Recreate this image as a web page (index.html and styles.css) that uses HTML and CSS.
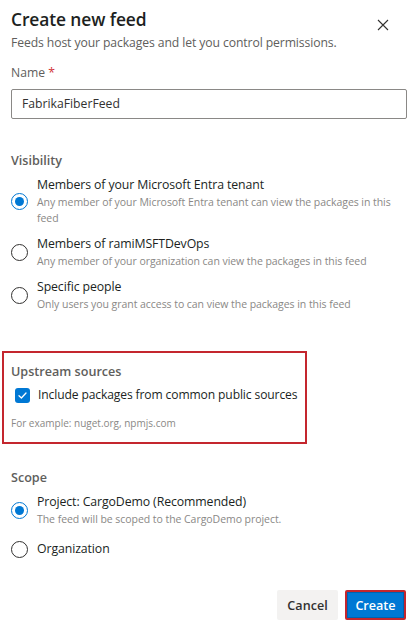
FILE: index.html
```html
<!DOCTYPE html>
<html lang="en">
<head>
<meta charset="utf-8">
<title>Create new feed</title>
<link rel="stylesheet" href="styles.css">
</head>
<body>
<div class="panel">
  <header class="header">
    <div class="head-text">
      <h1 class="title">Create new feed</h1>
      <p class="subtitle">Feeds host your packages and let you control permissions.</p>
    </div>
    <button class="close" aria-label="Close">
      <svg width="12" height="12" viewBox="0 0 12 12"><path d="M1 1 L11 11 M11 1 L1 11" stroke="#323130" stroke-width="1.1" fill="none"/></svg>
    </button>
  </header>

  <div class="field">
    <label class="label">Name <span class="req">*</span></label>
    <div class="input">FabrikaFiberFeed</div>
  </div>

  <section class="group vis">
    <div class="group-title">Visibility</div>
    <div class="option opt1">
      <span class="radio checked"></span>
      <div class="opt-text">
        <div class="opt-title">Members of your Microsoft Entra tenant</div>
        <div class="opt-desc">Any member of your Microsoft Entra tenant can view the packages in this feed</div>
      </div>
    </div>
    <div class="option opt2">
      <span class="radio"></span>
      <div class="opt-text">
        <div class="opt-title">Members of ramiMSFTDevOps</div>
        <div class="opt-desc">Any member of your organization can view the packages in this feed</div>
      </div>
    </div>
    <div class="option opt3">
      <span class="radio"></span>
      <div class="opt-text">
        <div class="opt-title">Specific people</div>
        <div class="opt-desc">Only users you grant access to can view the packages in this feed</div>
      </div>
    </div>
  </section>

  <section class="upstream">
    <div class="group-title">Upstream sources</div>
    <div class="check-row">
      <span class="checkbox">
        <svg width="15" height="15" viewBox="0 0 15 15"><path d="M4 7.8 L6.4 10 L11 5" stroke="#fff" stroke-width="1.3" fill="none" stroke-linecap="round" stroke-linejoin="round"/></svg>
      </span>
      <span class="check-label">Include packages from common public sources</span>
    </div>
    <div class="hint">For example: nuget.org, npmjs.com</div>
  </section>

  <section class="group scope">
    <div class="group-title">Scope</div>
    <div class="option sopt1">
      <span class="radio checked"></span>
      <div class="opt-text">
        <div class="opt-title">Project: CargoDemo (Recommended)</div>
        <div class="opt-desc">The feed will be scoped to the CargoDemo project.</div>
      </div>
    </div>
    <div class="option sopt2">
      <span class="radio"></span>
      <div class="opt-text">
        <div class="opt-title">Organization</div>
      </div>
    </div>
  </section>

  <footer class="footer">
    <button class="btn cancel">Cancel</button>
    <button class="btn create">Create</button>
  </footer>
</div>
</body>
</html>
```

FILE: styles.css
```css
* { box-sizing: border-box; }
html, body { margin: 0; padding: 0; background: #fff; }
body {
  font-family: "Open Sans", "Noto Sans", "Liberation Sans", sans-serif;
  color: #323130;
  width: 419px;
  height: 627px;
  overflow: hidden;
}
.panel {
  padding: 0 12px 0 11px;
  display: flex;
  flex-direction: column;
}
.header {
  display: flex;
  justify-content: space-between;
  align-items: flex-start;
  padding-top: 5px;
}
.title {
  margin: 0;
  font-size: 17.4px;
  font-weight: 600;
  line-height: 28px;
  color: #201f1e;
  letter-spacing: -0.1px;
}
.subtitle {
  margin: 1px 0 0;
  font-size: 12.2px;
  line-height: 18px;
  color: #605e5c;
  letter-spacing: -0.1px;
}
.close {
  border: 0;
  background: none;
  padding: 0;
  margin: 14px 18px 0 0;
  width: 12px;
  height: 12px;
  display: flex;
}
.field { margin-top: 12px; }
.label {
  display: block;
  font-size: 12.2px;
  line-height: 18px;
  color: #605e5c;
}
.req { color: #d13438; }
.input {
  margin-top: 7px;
  height: 30px;
  width: 396px;
  border: 1px solid #8a8886;
  border-radius: 2px;
  padding: 0 10px;
  font-size: 12.2px;
  line-height: 28px;
  color: #323130;
}
.group-title {
  font-size: 12.6px;
  font-weight: 600;
  line-height: 18px;
  color: #605e5c;
}
.vis { margin-top: 33px; }
.option {
  display: flex;
  align-items: center;
  gap: 9px;
}
.radio {
  flex: 0 0 auto;
  width: 17px;
  height: 17px;
  border: 1px solid #323130;
  border-radius: 50%;
  margin-top: 1px;
  position: relative;
}
.radio.checked { border-color: #0078d4; }
.radio.checked::after {
  content: "";
  position: absolute;
  left: 3px; top: 3px;
  width: 9px; height: 9px;
  border-radius: 50%;
  background: #0078d4;
}
.opt-title {
  font-size: 12.3px;
  line-height: 18px;
  color: #201f1e;
  letter-spacing: -0.1px;
}
.opt-desc {
  font-size: 10.5px;
  line-height: 16px;
  color: #8a8886;
  width: 360px;
  letter-spacing: -0.05px;
}
.opt1 { margin-top: 6px; }
.opt2 { margin-top: 9px; }
.opt3 { margin-top: 9px; }
.upstream {
  margin: 39px 0 0 -9px;
  width: 305px;
  height: 93px;
  border: 2px solid #c4262e;
  padding: 10px 0 0 7px;
}
.check-row {
  display: flex;
  align-items: center;
  gap: 8px;
  margin-top: 5px;
  padding-left: 4px;
}
.checkbox {
  flex: 0 0 auto;
  width: 15px;
  height: 15px;
  border-radius: 3px;
  background: #0078d4;
  display: flex;
}
.check-label {
  font-size: 12.1px;
  line-height: 18px;
  color: #201f1e;
  letter-spacing: -0.12px;
  white-space: nowrap;
}
.hint {
  margin-top: 12px;
  font-size: 10px;
  line-height: 14px;
  color: #8a8886;
}
.scope { margin-top: 25px; }
.sopt1 { margin-top: 6px; }
.sopt2 { margin-top: 13px; }
.sopt2 .radio { margin-top: 0; }
.footer {
  display: flex;
  justify-content: flex-end;
  gap: 7px;
  margin-top: 32px;
  padding-right: 1px;
}
.btn {
  font-family: inherit;
  font-size: 12.6px;
  font-weight: 600;
  height: 30px;
  border-radius: 2px;
  cursor: pointer;
}
.cancel {
  width: 61px;
  border: 0;
  background: #f3f2f1;
  color: #323130;
}
.create {
  width: 61px;
  border: 2px solid #c4262e;
  background: #0078d4;
  color: #fff;
  padding: 0;
  box-shadow: inset 0 0 0 1px #0063b1;
}
```
